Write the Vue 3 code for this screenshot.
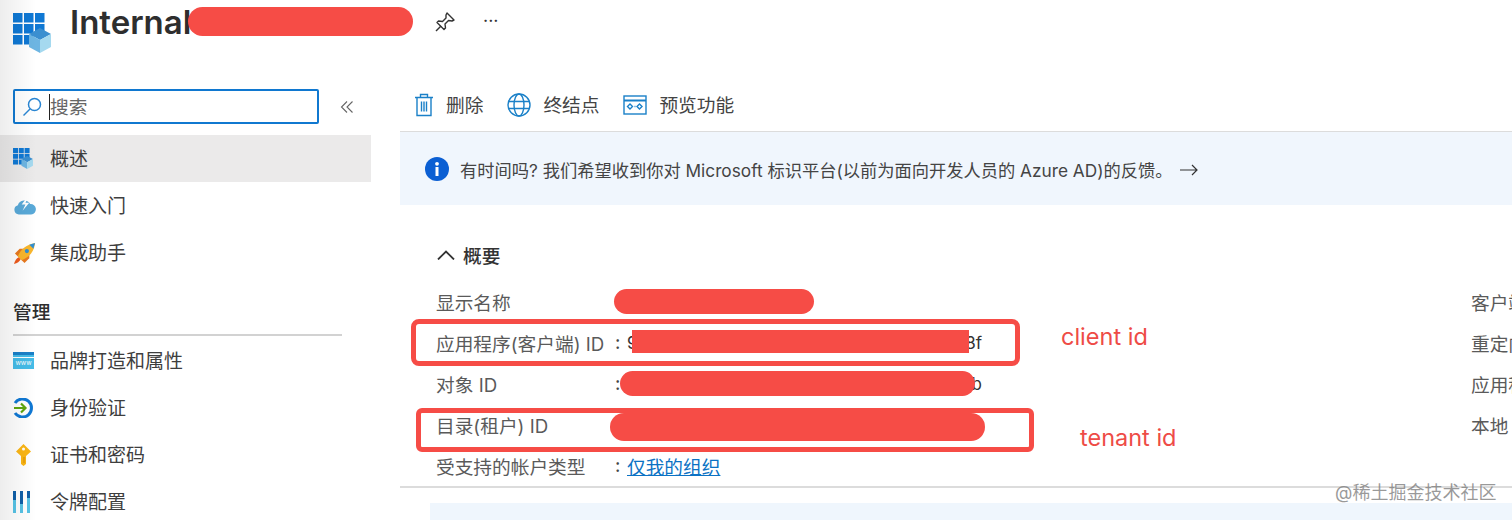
<script setup>
const leftRows = [
  { label: '显示名称', kind: 'dot' },
  { label: '应用程序(客户端) ID', kind: 'client' },
  { label: '对象 ID', kind: 'object' },
  { label: '目录(租户) ID', kind: 'none' },
  { label: '受支持的帐户类型', kind: 'link' },
]
const rightRows = ['客户端凭据', '重定向 URI', '应用程序 ID URI', '本地']
</script>

<template>
  <div class="page">
    <svg class="defs" width="0" height="0">
      <symbol id="app-reg" viewBox="0 0 38 40">
        <g fill="#0f78d4">
          <rect x="0" y="0" width="9.5" height="9.5" /><rect x="11" y="0" width="9.5" height="9.5" /><rect x="22" y="0" width="9.5" height="9.5" />
          <rect x="0" y="11" width="9.5" height="9.5" /><rect x="11" y="11" width="9.5" height="9.5" /><rect x="22" y="11" width="9.5" height="9.5" />
          <rect x="0" y="22" width="9.5" height="9.5" /><rect x="11" y="22" width="9.5" height="9.5" />
        </g>
        <path d="M16 21l11-6 11 6-11 6z" fill="#3b8fd0" />
        <path d="M16 21l11 6v13l-11-6z" fill="#6db5e2" />
        <path d="M38 21l-11 6v13l11-6z" fill="#a5d9ef" />
      </symbol>
    </svg>

    <header class="top">
      <svg class="logo" width="38" height="40"><use href="#app-reg" /></svg>
      <h1>Internal</h1>
      <svg class="pin" width="22" height="22" viewBox="0 0 22 22" fill="none" stroke="#333" stroke-width="1.4" stroke-linejoin="round">
        <path d="M13 2l7 7-2 1-3.5-.5-3.5 3.5.5 4-1.5 1.500-7-7 1.500-1.500 4 .5 3.500-3.500L12 4z" />
        <path d="M7 15l-5 5" />
      </svg>
      <span class="more">···</span>
    </header>

    <div class="body">
      <aside class="side">
        <div class="search-row">
          <div class="search">
            <svg width="20" height="20" viewBox="0 0 20 20" fill="none" stroke="#2a86d3" stroke-width="1.500">
              <circle cx="12.500" cy="7.500" r="6" />
              <path d="M8 12l-6.500 6.500" />
            </svg>
            <span class="caret"></span>
            <span class="ph">搜索</span>
          </div>
          <svg class="collapse" width="14" height="14" viewBox="0 0 14 14" fill="none" stroke="#666" stroke-width="1.100">
            <path d="M7 1.500L1.500 7 7 12.500M12.500 1.500L7 7l5.500 5.500" />
          </svg>
        </div>

        <nav>
          <a class="item active">
            <svg class="ic" width="20" height="21"><use href="#app-reg" /></svg>
            <span>概述</span>
          </a>
          <a class="item">
            <svg class="ic" width="23" height="18" viewBox="0 0 24 19">
              <path d="M6 18.500a5 5 0 0 1-1-9.800A7 7 0 0 1 18 7.500a5.500 5.500 0 0 1 1 11z" fill="#59a9d8" />
              <path d="M15 0l-6 8h4l-3 6.500 7-8.500h-4l3.500-6z" fill="#fff" />
            </svg>
            <span>快速入门</span>
          </a>
          <a class="item">
            <svg class="ic" width="23" height="23" viewBox="0 0 24 24">
              <path d="M2 12l5-5 5 0-6 9z" fill="#e8791e" />
              <path d="M12 22l5-5 0-5-9 6z" fill="#e8791e" />
              <path d="M5 15C8 7 14 3 23 1c-1 9-6 15-14 18z" fill="#f9b62c" />
              <path d="M17 2.800L23 1l-1.700 6z" fill="#2f8fd4" />
              <circle cx="14.500" cy="9.500" r="2.200" fill="#2f8fd4" />
              <path d="M6 16c-2.500 1-4 3.500-5 7 3.500-1 6-2.500 7-5z" fill="#ee5a1c" />
            </svg>
            <span>集成助手</span>
          </a>

          <div class="group">管理</div>

          <a class="item">
            <svg class="ic" width="21" height="17" viewBox="0 0 21 17">
              <rect width="21" height="17" fill="#45bce8" />
              <rect width="21" height="3" fill="#1a80c8" />
              <rect y="5" width="21" height="1" fill="#fff" />
              <text x="10.500" y="12.500" text-anchor="middle" font-size="6.500" fill="#fff">www</text>
            </svg>
            <span>品牌打造和属性</span>
          </a>
          <a class="item">
            <svg class="ic" width="20" height="20" viewBox="0 0 20 20" fill="none">
              <path d="M2 5a9 9 0 1 1 0 10" stroke="#0f78d4" stroke-width="3" />
              <path d="M1 10h11M8 5.500l4.500 4.500L8 14.500" stroke="#5ea60e" stroke-width="2.200" />
            </svg>
            <span>身份验证</span>
          </a>
          <a class="item">
            <svg class="ic key" width="15" height="22" viewBox="0 0 15 22">
              <path d="M7.500 0L15 7.500 10 12v8l-2.500 2L5 20v-8L0 7.500z" fill="#fbb615" />
              <circle cx="7.500" cy="5" r="1.500" fill="#fff" />
              <path d="M8 13v6" stroke="#d98e05" />
            </svg>
            <span>证书和密码</span>
          </a>
          <a class="item">
            <svg class="ic" width="17" height="22" viewBox="0 0 17 22">
              <rect width="3" height="22" fill="#57c3e6" /><rect x="7" width="3" height="22" fill="#57c3e6" /><rect x="14" width="3" height="22" fill="#57c3e6" />
              <rect width="3" height="9" fill="#0f5fa8" /><rect x="7" width="3" height="13" fill="#0f5fa8" /><rect x="14" width="3" height="7" fill="#0f5fa8" />
            </svg>
            <span>令牌配置</span>
          </a>
        </nav>
      </aside>

      <main class="main">
        <div class="toolbar">
          <button class="tool">
            <svg width="20" height="24" viewBox="0 0 20 24" fill="none" stroke="#1a80c8" stroke-width="1.400">
              <path d="M1 4.500h18M6.500 4.500V1.500h7v3M3 4.500V22.500h14V4.500M7.500 8.500v10M10 8.500v10M12.500 8.500v10" />
            </svg>
            <span>删除</span>
          </button>
          <button class="tool">
            <svg width="24" height="24" viewBox="0 0 24 24" fill="none" stroke="#1a80c8" stroke-width="1.400">
              <circle cx="12" cy="12" r="11" />
              <ellipse cx="12" cy="12" rx="5" ry="11" />
              <path d="M1.500 8.500h21M1.500 15.500h21" />
            </svg>
            <span>终结点</span>
          </button>
          <button class="tool">
            <svg width="24" height="20" viewBox="0 0 24 20" fill="none" stroke="#1a80c8" stroke-width="1.400">
              <rect x="1" y="1" width="22" height="18" />
              <path d="M1 5.500h22" stroke-width="2" />
              <path d="M7 9l2.500 2.500L7 14l-2.500-2.500zM16.500 9l2.500 2.500-2.500 2.500-2.500-2.500z" />
              <path d="M11.500 11.500h1" />
            </svg>
            <span>预览功能</span>
          </button>
        </div>

        <div class="banner">
          <svg width="24" height="24" viewBox="0 0 24 24">
            <circle cx="12" cy="12" r="12" fill="#0b5fd3" />
            <rect x="10.500" y="10" width="3" height="9" fill="#fff" />
            <circle cx="12" cy="6.800" r="1.900" fill="#fff" />
          </svg>
          <span class="banner-text">有时间吗? 我们希望收到你对 Microsoft 标识平台(以前为面向开发人员的 Azure AD)的反馈。</span>
          <svg class="arrow" width="18" height="12" viewBox="0 0 18 12" fill="none" stroke="#333" stroke-width="1.200">
            <path d="M0 6h17M12 1l5 5-5 5" />
          </svg>
        </div>

        <section class="essentials">
          <h2>
            <svg width="18" height="10" viewBox="0 0 18 10" fill="none" stroke="#333" stroke-width="1.800">
              <path d="M1 9.500l8-8 8 8" />
            </svg>
            概要
          </h2>
          <div class="cols">
            <div class="col-left">
              <div v-for="row in leftRows" :key="row.label" class="row">
                <span class="label">{{ row.label }}</span>
                <span v-if="row.kind !== 'none'" class="colon">:</span>
                <a v-if="row.kind === 'link'" class="link">仅我的组织</a>
                <span v-else-if="row.kind === 'client'" class="value"><i>9</i><i>8f</i></span>
                <span v-else-if="row.kind === 'object'" class="value"><i></i><i>b</i></span>
              </div>
            </div>
            <div class="col-right">
              <div v-for="label in rightRows" :key="label" class="row">
                <span class="label">{{ label }}</span>
              </div>
            </div>
          </div>
        </section>
        <div class="next-banner"></div>
      </main>
    </div>

    <!-- annotations painted on top of the shot -->
    <div class="edge"></div>
    <div class="mark pill m-title"></div>
    <div class="mark pill m-name"></div>
    <div class="mark m-client"></div>
    <div class="mark pill m-object"></div>
    <div class="box b-client"></div>
    <div class="box b-tenant"></div>
    <div class="mark pill m-tenant"></div>
    <span class="note n-client">client id</span>
    <span class="note n-tenant">tenant id</span>
    <span class="watermark">@稀土掘金技术社区</span>
  </div>
</template>

<style>
html,
body {
  margin: 0;
  background: #fff;
}
</style>

<style scoped>
.page {
  position: relative;
  width: 1512px;
  height: 520px;
  overflow: hidden;
  background: #fff;
  font-family: Inter, "Noto Sans CJK SC", sans-serif;
  font-size: 18.7px;
  color: #444;
}
.defs {
  position: absolute;
}
.top {
  height: 80px;
  display: flex;
  align-items: flex-start;
  box-sizing: border-box;
  padding: 13px 0 0 13px;
}
.logo {
  flex: none;
}
h1 {
  margin: -11px 0 0 19px;
  width: 120px;
  flex: none;
  font-size: 33px;
  line-height: 40px;
  font-weight: 600;
  color: #2e2e2e;
  white-space: nowrap;
}
.pin {
  margin: -2px 0 0 244px;
}
.more {
  margin: -4px 0 0 27px;
  font-size: 18px;
  line-height: 24px;
  color: #333;
}
.body {
  display: flex;
  height: 440px;
}
.side {
  width: 371px;
  flex: none;
  padding-top: 9px;
}
.search-row {
  display: flex;
  align-items: center;
  padding-left: 13px;
}
.search {
  width: 306px;
  height: 35px;
  box-sizing: border-box;
  border: 2.500px solid #1078d0;
  border-radius: 2px;
  display: flex;
  align-items: center;
  padding-left: 7px;
  gap: 7px;
}
.caret {
  width: 1px;
  height: 26px;
  background: #222;
  margin-right: -7px;
}
.ph {
  color: #666;
  padding-bottom: 2px;
}
.collapse {
  margin-left: 21px;
}
nav {
  margin-top: 11px;
}
.item {
  display: grid;
  grid-template-columns: 37px 1fr;
  align-items: center;
  height: 47.300px;
  padding-left: 13px;
  color: #3e3e3e;
  font-size: 19px;
}
.item span {
  padding-bottom: 3px;
}
.active {
  background: #ebeaea;
}
.group {
  margin: 12px 29px 1px 13px;
  height: 47px;
  box-sizing: border-box;
  border-bottom: 2px solid #d2d2d2;
  line-height: 47px;
  font-weight: 500;
  color: #2e2e2e;
}
.key {
  margin-left: 3px;
}
.main {
  flex: 1;
  min-width: 0;
  margin-left: 29px;
}
.toolbar {
  height: 52px;
  box-sizing: border-box;
  border-bottom: 1px solid #dcdcdc;
  display: flex;
  align-items: center;
  padding: 0 0 2px 14px;
  gap: 24px;
}
.tool {
  border: none;
  background: none;
  padding: 0;
  display: flex;
  align-items: center;
  gap: 12px;
  font: inherit;
  color: #444;
}
.tool span {
  padding-bottom: 2px;
}
.banner {
  height: 73px;
  background: #f0f6fd;
  display: flex;
  align-items: center;
  padding-left: 25px;
  font-size: 17.250px;
}
.banner-text {
  margin-left: 11px;
  padding-top: 2px;
  white-space: nowrap;
}
.arrow {
  margin-left: 8px;
  margin-top: 2px;
}
.essentials {
  margin-top: 35px;
  padding-left: 30px;
  border-bottom: 2px solid #dcdcdc;
  height: 248px;
  box-sizing: border-box;
}
h2 {
  margin: 0 0 0 7px;
  height: 29px;
  display: flex;
  align-items: center;
  gap: 8px;
  font-size: 18.700px;
  font-weight: 500;
  color: #333;
}
.cols {
  display: flex;
  margin-top: 12px;
  padding-left: 6px;
}
.col-left {
  width: 1035px;
  flex: none;
}
.row {
  height: 41px;
  display: flex;
  align-items: center;
  white-space: nowrap;
}
.label {
  color: #5a5a5a;
}
.col-left .label {
  width: 179px;
  flex: none;
}
.colon {
  width: 12px;
  flex: none;
  color: #444;
}
.value {
  width: 355px;
  display: flex;
  justify-content: space-between;
  color: #333;
  font-size: 17px;
}
.value i {
  font-style: normal;
}
.link {
  color: #0b72c4;
  text-decoration: underline;
}
.next-banner {
  margin: 15px 0 0 30px;
  height: 30px;
  background: #eff6fd;
}
.edge {
  position: absolute;
  inset: 0 auto 0 0;
  width: 36px;
  background: linear-gradient(to right, rgba(0, 0, 0, 0.07), rgba(0, 0, 0, 0));
  pointer-events: none;
}
.mark {
  position: absolute;
  background: #f64c46;
}
.pill {
  border-radius: 20px;
}
.m-title {
  left: 188px;
  top: 7px;
  width: 225px;
  height: 29px;
}
.m-name {
  left: 614px;
  top: 289px;
  width: 200px;
  height: 25px;
}
.m-client {
  left: 632px;
  top: 330px;
  width: 337px;
  height: 23px;
}
.m-object {
  left: 620px;
  top: 371px;
  width: 355px;
  height: 25px;
}
.m-tenant {
  left: 610px;
  top: 413px;
  width: 375px;
  height: 28px;
}
.box {
  position: absolute;
  box-sizing: border-box;
  border: 5px solid #f64c46;
  border-radius: 8px;
}
.b-client {
  left: 411px;
  top: 319px;
  width: 609px;
  height: 47px;
}
.b-tenant {
  left: 416px;
  top: 408px;
  width: 618px;
  height: 44px;
  border-radius: 6px;
}
.note {
  position: absolute;
  font-size: 23.500px;
  line-height: 30px;
  color: #ee4b46;
  white-space: nowrap;
}
.n-client {
  left: 1061px;
  top: 322px;
}
.n-tenant {
  left: 1080px;
  top: 423px;
}
.watermark {
  position: absolute;
  left: 1335px;
  top: 481px;
  font-size: 18px;
  line-height: 24px;
  color: rgba(120, 120, 120, 0.75);
  white-space: nowrap;
}
</style>
